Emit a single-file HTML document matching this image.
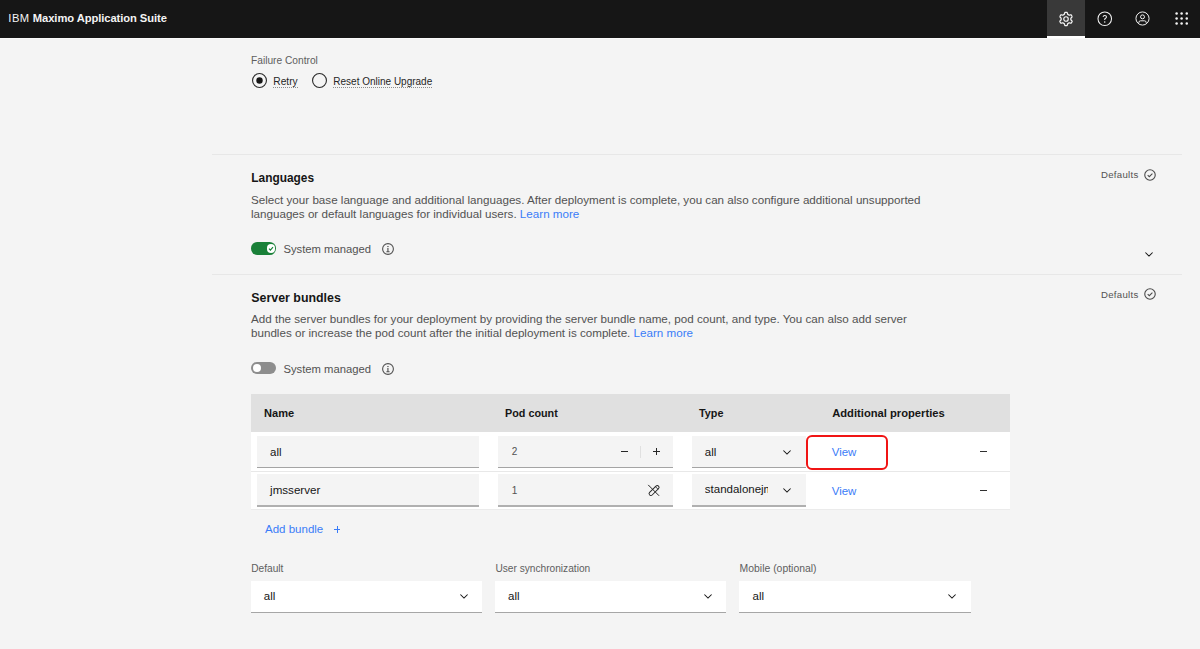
<!DOCTYPE html>
<html><head><meta charset="utf-8">
<style>
*{box-sizing:border-box;margin:0;padding:0}
html,body{width:1200px;height:649px;overflow:hidden;background:#f4f4f4;font-family:"Liberation Sans",sans-serif;color:#161616}
.a{position:absolute}
.t{position:absolute;line-height:1;white-space:nowrap}
.b{font-weight:bold}
#hdr{left:0;top:0;width:1200px;height:38px;background:#161616}
.lnk{color:#3a7cf8}
.sec{color:#5e5e5e}
.hr{position:absolute;left:212px;width:970px;height:1px;background:#e7e7e7}
.inp{position:absolute;background:#f4f4f4;border-bottom:1px solid #a4a4a4}
.inp2{border-bottom:2px solid #b0b0b0}
.sel{position:absolute;background:#fff;border-bottom:1px solid #a6a6a6}
svg{position:absolute;overflow:visible}
</style></head><body>
<!-- header -->
<div id="hdr" class="a"></div>
<div class="t" style="left:8.3px;top:12.9px;font-size:11.2px;color:#f4f4f4"><span style="letter-spacing:0.5px">IBM</span> <span class="b" style="letter-spacing:-0.07px">Maximo Application Suite</span></div>
<div class="a" style="left:1047px;top:0;width:38px;height:36px;background:#393939"></div>
<div class="a" style="left:1047px;top:36px;width:38px;height:2px;background:#fff"></div>
<div class="a" style="left:0;top:38px;width:1200px;height:1px;background:#fafafa"></div>

<!-- gear -->
<svg style="left:1058px;top:10.6px" width="16" height="16" viewBox="0 0 16 16"><path fill="none" stroke="#f4f4f4" stroke-width="1.25" stroke-linejoin="round" d="M12.90,8.00 L12.90,8.09 L12.90,8.17 L12.89,8.26 L12.89,8.34 L12.88,8.43 L12.87,8.51 L12.86,8.60 L12.85,8.68 L12.84,8.77 L12.91,8.87 L13.03,8.98 L13.16,9.10 L13.29,9.22 L13.42,9.35 L13.55,9.49 L13.68,9.63 L13.80,9.77 L13.92,9.92 L14.03,10.07 L14.12,10.23 L14.16,10.37 L14.12,10.47 L14.08,10.58 L14.03,10.68 L13.98,10.79 L13.93,10.89 L13.88,11.00 L13.83,11.10 L13.77,11.20 L13.72,11.30 L13.66,11.40 L13.60,11.50 L13.54,11.59 L13.47,11.69 L13.41,11.79 L13.34,11.88 L13.27,11.97 L13.20,12.06 L13.13,12.15 L12.99,12.19 L12.81,12.18 L12.62,12.16 L12.44,12.14 L12.25,12.11 L12.07,12.07 L11.88,12.02 L11.70,11.97 L11.53,11.92 L11.36,11.87 L11.20,11.82 L11.08,11.81 L11.02,11.86 L10.95,11.91 L10.88,11.96 L10.81,12.01 L10.74,12.06 L10.67,12.11 L10.60,12.16 L10.52,12.20 L10.45,12.24 L10.38,12.29 L10.30,12.33 L10.22,12.37 L10.15,12.40 L10.07,12.44 L9.99,12.48 L9.91,12.51 L9.84,12.54 L9.76,12.57 L9.70,12.68 L9.67,12.85 L9.63,13.02 L9.59,13.19 L9.54,13.37 L9.49,13.55 L9.43,13.73 L9.37,13.91 L9.29,14.09 L9.22,14.26 L9.13,14.42 L9.03,14.52 L8.92,14.54 L8.80,14.55 L8.69,14.56 L8.58,14.57 L8.46,14.58 L8.35,14.59 L8.23,14.60 L8.12,14.60 L8.00,14.60 L7.88,14.60 L7.77,14.60 L7.65,14.59 L7.54,14.58 L7.42,14.57 L7.31,14.56 L7.20,14.55 L7.08,14.54 L6.97,14.52 L6.87,14.42 L6.78,14.26 L6.71,14.09 L6.63,13.91 L6.57,13.73 L6.51,13.55 L6.46,13.37 L6.41,13.19 L6.37,13.02 L6.33,12.85 L6.30,12.68 L6.24,12.57 L6.16,12.54 L6.09,12.51 L6.01,12.48 L5.93,12.44 L5.85,12.40 L5.78,12.37 L5.70,12.33 L5.62,12.29 L5.55,12.24 L5.48,12.20 L5.40,12.16 L5.33,12.11 L5.26,12.06 L5.19,12.01 L5.12,11.96 L5.05,11.91 L4.98,11.86 L4.92,11.81 L4.80,11.82 L4.64,11.87 L4.47,11.92 L4.30,11.97 L4.12,12.02 L3.93,12.07 L3.75,12.11 L3.56,12.14 L3.38,12.16 L3.19,12.18 L3.01,12.19 L2.87,12.15 L2.80,12.06 L2.73,11.97 L2.66,11.88 L2.59,11.79 L2.53,11.69 L2.46,11.59 L2.40,11.50 L2.34,11.40 L2.28,11.30 L2.23,11.20 L2.17,11.10 L2.12,11.00 L2.07,10.89 L2.02,10.79 L1.97,10.68 L1.92,10.58 L1.88,10.47 L1.84,10.37 L1.88,10.23 L1.97,10.07 L2.08,9.92 L2.20,9.77 L2.32,9.63 L2.45,9.49 L2.58,9.35 L2.71,9.22 L2.84,9.10 L2.97,8.98 L3.09,8.87 L3.16,8.77 L3.15,8.68 L3.14,8.60 L3.13,8.51 L3.12,8.43 L3.11,8.34 L3.11,8.26 L3.10,8.17 L3.10,8.09 L3.10,8.00 L3.10,7.91 L3.10,7.83 L3.11,7.74 L3.11,7.66 L3.12,7.57 L3.13,7.49 L3.14,7.40 L3.15,7.32 L3.16,7.23 L3.09,7.13 L2.97,7.02 L2.84,6.90 L2.71,6.78 L2.58,6.65 L2.45,6.51 L2.32,6.37 L2.20,6.23 L2.08,6.08 L1.97,5.93 L1.88,5.77 L1.84,5.63 L1.88,5.53 L1.92,5.42 L1.97,5.32 L2.02,5.21 L2.07,5.11 L2.12,5.00 L2.17,4.90 L2.23,4.80 L2.28,4.70 L2.34,4.60 L2.40,4.50 L2.46,4.41 L2.53,4.31 L2.59,4.21 L2.66,4.12 L2.73,4.03 L2.80,3.94 L2.87,3.85 L3.01,3.81 L3.19,3.82 L3.38,3.84 L3.56,3.86 L3.75,3.89 L3.93,3.93 L4.12,3.98 L4.30,4.03 L4.47,4.08 L4.64,4.13 L4.80,4.18 L4.92,4.19 L4.98,4.14 L5.05,4.09 L5.12,4.04 L5.19,3.99 L5.26,3.94 L5.33,3.89 L5.40,3.84 L5.48,3.80 L5.55,3.76 L5.62,3.71 L5.70,3.67 L5.78,3.63 L5.85,3.60 L5.93,3.56 L6.01,3.52 L6.09,3.49 L6.16,3.46 L6.24,3.43 L6.30,3.32 L6.33,3.15 L6.37,2.98 L6.41,2.81 L6.46,2.63 L6.51,2.45 L6.57,2.27 L6.63,2.09 L6.71,1.91 L6.78,1.74 L6.87,1.58 L6.97,1.48 L7.08,1.46 L7.20,1.45 L7.31,1.44 L7.42,1.43 L7.54,1.42 L7.65,1.41 L7.77,1.40 L7.88,1.40 L8.00,1.40 L8.12,1.40 L8.23,1.40 L8.35,1.41 L8.46,1.42 L8.58,1.43 L8.69,1.44 L8.80,1.45 L8.92,1.46 L9.03,1.48 L9.13,1.58 L9.22,1.74 L9.29,1.91 L9.37,2.09 L9.43,2.27 L9.49,2.45 L9.54,2.63 L9.59,2.81 L9.63,2.98 L9.67,3.15 L9.70,3.32 L9.76,3.43 L9.84,3.46 L9.91,3.49 L9.99,3.52 L10.07,3.56 L10.15,3.60 L10.22,3.63 L10.30,3.67 L10.38,3.71 L10.45,3.76 L10.52,3.80 L10.60,3.84 L10.67,3.89 L10.74,3.94 L10.81,3.99 L10.88,4.04 L10.95,4.09 L11.02,4.14 L11.08,4.19 L11.20,4.18 L11.36,4.13 L11.53,4.08 L11.70,4.03 L11.88,3.98 L12.07,3.93 L12.25,3.89 L12.44,3.86 L12.62,3.84 L12.81,3.82 L12.99,3.81 L13.13,3.85 L13.20,3.94 L13.27,4.03 L13.34,4.12 L13.41,4.21 L13.47,4.31 L13.54,4.41 L13.60,4.50 L13.66,4.60 L13.72,4.70 L13.77,4.80 L13.83,4.90 L13.88,5.00 L13.93,5.11 L13.98,5.21 L14.03,5.32 L14.08,5.42 L14.12,5.53 L14.16,5.63 L14.12,5.77 L14.03,5.93 L13.92,6.08 L13.80,6.23 L13.68,6.37 L13.55,6.51 L13.42,6.65 L13.29,6.78 L13.16,6.90 L13.03,7.02 L12.91,7.13 L12.84,7.23 L12.85,7.32 L12.86,7.40 L12.87,7.49 L12.88,7.57 L12.89,7.66 L12.89,7.74 L12.90,7.83 L12.90,7.91Z"/><circle cx="8" cy="8" r="2.25" fill="none" stroke="#f4f4f4" stroke-width="1.2"/></svg>
<!-- help -->
<svg style="left:1096.7px;top:10.6px" width="15.5" height="15.5" viewBox="0 0 32 32"><circle cx="16" cy="16" r="14" fill="none" stroke="#f4f4f4" stroke-width="2.1"/><path fill="#f4f4f4" d="M16.8,22.5a1.5,1.5,0,1,1-1.5-1.5A1.5,1.5,0,0,1,16.8,22.5Z" transform="translate(0.7,0)"/><path fill="none" stroke="#f4f4f4" stroke-width="2.1" d="M12.5,12.2a3.6,3.6,0,0,1,3.5-3.1c2.1,0,3.6,1.4,3.6,3.2c0,1.8-1.5,2.6-2.6,3.2c-0.6,0.35-1,0.8-1,1.6v1.3"/></svg>
<!-- user -->
<svg style="left:1135.1px;top:10.8px" width="15" height="15" viewBox="0 0 32 32"><circle cx="16" cy="16" r="14" fill="none" stroke="#f4f4f4" stroke-width="2.1"/><circle cx="16" cy="12.5" r="4.2" fill="none" stroke="#f4f4f4" stroke-width="2.1"/><path fill="none" stroke="#f4f4f4" stroke-width="2.1" d="M8.2,25.6v-1.1a3.6,3.6,0,0,1,3.6-3.6h8.4a3.6,3.6,0,0,1,3.6,3.6v1.1"/></svg>
<!-- grid -->
<svg style="left:1175px;top:12px" width="13" height="13" viewBox="0 0 13 13"><g fill="#f4f4f4"><circle cx="1.6" cy="1.4" r="1.25"/><circle cx="6.6" cy="1.4" r="1.25"/><circle cx="11.75" cy="1.4" r="1.25"/><circle cx="1.6" cy="6.4" r="1.25"/><circle cx="6.6" cy="6.4" r="1.25"/><circle cx="11.75" cy="6.4" r="1.25"/><circle cx="1.6" cy="11.4" r="1.25"/><circle cx="6.6" cy="11.4" r="1.25"/><circle cx="11.75" cy="11.4" r="1.25"/></g></svg>

<!-- Failure control -->
<div class="t sec" style="left:251px;top:56.2px;font-size:10.2px">Failure Control</div>
<svg style="left:252.2px;top:73.4px" width="15" height="15" viewBox="0 0 15 15"><circle cx="7.5" cy="7.5" r="6.95" fill="none" stroke="#2a2a2a" stroke-width="1.1"/><circle cx="7.5" cy="7.5" r="3.2" fill="#161616"/></svg>
<div class="t" style="left:273.3px;top:76.7px;font-size:10.2px;color:#262626">Retry</div>
<div class="a" style="left:273px;top:87px;width:25px;height:0;border-top:1px dotted #8d8d8d"></div>
<svg style="left:312.2px;top:73.4px" width="15" height="15" viewBox="0 0 15 15"><circle cx="7.5" cy="7.5" r="6.95" fill="none" stroke="#2a2a2a" stroke-width="1.1"/></svg>
<div class="t" style="left:333.3px;top:76.7px;font-size:10px;color:#262626">Reset Online Upgrade</div>
<div class="a" style="left:333px;top:87px;width:99px;height:0;border-top:1px dotted #8d8d8d"></div>

<div class="hr" style="top:154px"></div>

<!-- Languages -->
<div class="t b" style="left:251.3px;top:173px;font-size:11.9px">Languages</div>
<div class="t" style="left:251px;top:194px;font-size:11.64px;color:#525252">Select your base language and additional languages. After deployment is complete, you can also configure additional unsupported</div>
<div class="t" style="left:251px;top:208.2px;font-size:11.64px;color:#525252">languages or default languages for individual users. <span class="lnk">Learn more</span></div>
<div class="t" style="left:1101px;top:170.4px;font-size:9.6px;letter-spacing:0.3px;color:#525252">Defaults</div>
<svg style="left:1143.7px;top:168.8px" width="12" height="12" viewBox="0 0 32 32"><circle cx="16" cy="16" r="14" fill="none" stroke="#4a4a4a" stroke-width="2.9"/><path fill="none" stroke="#4a4a4a" stroke-width="2.7" d="M9.8,16.3l4.3,4.3l8.3-8.3"/></svg>
<!-- toggle on -->
<div class="a" style="left:251px;top:242px;width:25.4px;height:12.8px;border-radius:6.4px;background:#198038"></div>
<div class="a" style="left:266.8px;top:244.1px;width:8.6px;height:8.6px;border-radius:50%;background:#fff"></div>
<svg style="left:266px;top:243px" width="10" height="10" viewBox="0 0 10 10"><path fill="none" stroke="#198038" stroke-width="1.2" d="M3,5.6l1.4,1.5l2.6,-3"/></svg>
<div class="t" style="left:283.4px;top:244px;font-size:11.26px;color:#525252">System managed</div>
<svg style="left:382px;top:243.1px" width="12" height="12" viewBox="0 0 12 12"><circle cx="6" cy="6" r="5.4" fill="none" stroke="#525252" stroke-width="1.1"/><path fill="#525252" d="M5.3,5.1h1.2v3.2h1.1v0.9h-3.2v-0.9h1z"/><rect x="5.3" y="3.0" width="1.3" height="1.1" fill="#525252"/></svg>
<svg style="left:1145.1px;top:252.4px" width="8" height="5" viewBox="0 0 8 5"><path fill="none" stroke="#161616" stroke-width="1.05" d="M0.4,0.5l3.6,3.6l3.6,-3.6"/></svg>

<div class="hr" style="top:274px"></div>

<!-- Server bundles -->
<div class="t b" style="left:251.3px;top:291.6px;font-size:12.4px">Server bundles</div>
<div class="t" style="left:251px;top:312.8px;font-size:11.64px;color:#525252">Add the server bundles for your deployment by providing the server bundle name, pod count, and type. You can also add server</div>
<div class="t" style="left:251px;top:327px;font-size:11.64px;color:#525252">bundles or increase the pod count after the initial deployment is complete. <span class="lnk">Learn more</span></div>
<div class="t" style="left:1101px;top:290px;font-size:9.6px;letter-spacing:0.3px;color:#525252">Defaults</div>
<svg style="left:1143.7px;top:288.4px" width="12" height="12" viewBox="0 0 32 32"><circle cx="16" cy="16" r="14" fill="none" stroke="#4a4a4a" stroke-width="2.9"/><path fill="none" stroke="#4a4a4a" stroke-width="2.7" d="M9.8,16.3l4.3,4.3l8.3-8.3"/></svg>
<!-- toggle off -->
<div class="a" style="left:251px;top:361.6px;width:25.4px;height:12.8px;border-radius:6.4px;background:#8d8d8d"></div>
<div class="a" style="left:252.6px;top:363.7px;width:8.6px;height:8.6px;border-radius:50%;background:#fff"></div>
<div class="t" style="left:283.4px;top:363.6px;font-size:11.26px;color:#525252">System managed</div>
<svg style="left:382px;top:362.7px" width="12" height="12" viewBox="0 0 12 12"><circle cx="6" cy="6" r="5.4" fill="none" stroke="#525252" stroke-width="1.1"/><path fill="#525252" d="M5.3,5.1h1.2v3.2h1.1v0.9h-3.2v-0.9h1z"/><rect x="5.3" y="3.0" width="1.3" height="1.1" fill="#525252"/></svg>

<!-- table -->
<div class="a" style="left:251px;top:394px;width:759px;height:38px;background:#e0e0e0"></div>
<div class="t b" style="left:264.1px;top:408.3px;font-size:11.07px">Name</div>
<div class="t b" style="left:505px;top:408.3px;font-size:10.8px">Pod count</div>
<div class="t b" style="left:699px;top:408.3px;font-size:10.8px">Type</div>
<div class="t b" style="left:832.2px;top:408.3px;font-size:11.2px">Additional properties</div>

<div class="a" style="left:251px;top:432px;width:759px;height:39px;background:#fff"></div>
<div class="a" style="left:251px;top:471px;width:759px;height:1px;background:#e8e8e8"></div>
<div class="a" style="left:251px;top:472px;width:759px;height:37px;background:#fff"></div>
<div class="a" style="left:251px;top:509px;width:759px;height:1px;background:#ebebeb"></div>

<!-- row 1 -->
<div class="inp" style="left:257px;top:436px;width:222px;height:32px"></div>
<div class="t" style="left:270.1px;top:447px;font-size:11.5px;color:#161616">all</div>
<div class="inp" style="left:498px;top:436px;width:175px;height:32px"></div>
<div class="t" style="left:511.8px;top:447.4px;font-size:10px;color:#525252">2</div>
<div class="a" style="left:621px;top:451px;width:7px;height:1px;background:#262626"></div>
<div class="a" style="left:640px;top:446px;width:1px;height:12px;background:#e0e0e0"></div>
<div class="a" style="left:653.3px;top:451px;width:7px;height:1px;background:#262626"></div>
<div class="a" style="left:656.2px;top:448px;width:1px;height:7px;background:#262626"></div>
<div class="inp" style="left:692px;top:436px;width:114px;height:32px"></div>
<div class="t" style="left:704.8px;top:447px;font-size:11.5px;color:#161616">all</div>
<svg style="left:782.5px;top:450px" width="8" height="5" viewBox="0 0 8 5"><path fill="none" stroke="#161616" stroke-width="1.05" d="M0.4,0.5l3.6,3.6l3.6,-3.6"/></svg>
<div class="t lnk" style="left:831.7px;top:446.5px;font-size:11.48px">View</div>
<div class="a" style="left:806.4px;top:435.3px;width:81.2px;height:34.4px;border:2px solid #f01414;border-radius:6px"></div>
<div class="a" style="left:980.3px;top:451px;width:6.8px;height:1.4px;background:#303030"></div>

<!-- row 2 -->
<div class="inp inp2" style="left:257px;top:474px;width:222px;height:33px"></div>
<div class="t" style="left:270.1px;top:483.6px;font-size:11.6px;color:#161616">jmsserver</div>
<div class="inp inp2" style="left:498px;top:474px;width:175px;height:33px"></div>
<div class="t" style="left:511.8px;top:485.8px;font-size:10px;color:#525252">1</div>
<svg style="left:646px;top:482px" width="16" height="16" viewBox="0 0 16 16"><line x1="2.2" y1="2.9" x2="13.1" y2="13.8" stroke="#262626" stroke-width="1"/><g transform="translate(0.2,0.6) rotate(-45 7.8 8)"><rect x="1.6" y="6.2" width="12.6" height="3.6" rx="1.8" fill="none" stroke="#262626" stroke-width="0.95"/><line x1="11.6" y1="6.2" x2="11.6" y2="9.8" stroke="#262626" stroke-width="0.8"/></g></svg>
<div class="inp inp2" style="left:692px;top:474px;width:114px;height:33px"></div>
<div class="t" style="left:704.8px;top:484.4px;font-size:11.5px;color:#161616;width:63px;overflow:hidden">standalonejms</div>
<svg style="left:782.5px;top:487.6px" width="8" height="5" viewBox="0 0 8 5"><path fill="none" stroke="#161616" stroke-width="1.05" d="M0.4,0.5l3.6,3.6l3.6,-3.6"/></svg>
<div class="t lnk" style="left:831.7px;top:485.6px;font-size:11.48px">View</div>
<div class="a" style="left:980.3px;top:489.8px;width:6.8px;height:1.4px;background:#303030"></div>

<!-- add bundle -->
<div class="t lnk" style="left:265px;top:524.4px;font-size:11.52px">Add bundle</div>
<div class="a" style="left:333.8px;top:529px;width:6.6px;height:1px;background:#3a7cf8"></div>
<div class="a" style="left:336.6px;top:526px;width:1px;height:6.6px;background:#3a7cf8"></div>

<!-- bottom selects -->
<div class="t sec" style="left:251.2px;top:564px;font-size:10.17px">Default</div>
<div class="sel" style="left:251px;top:581px;width:231px;height:31.5px"></div>
<div class="t" style="left:263.8px;top:591.2px;font-size:11.5px">all</div>
<svg style="left:459.6px;top:594.1px" width="8" height="5" viewBox="0 0 8 5"><path fill="none" stroke="#161616" stroke-width="1.05" d="M0.4,0.5l3.6,3.6l3.6,-3.6"/></svg>

<div class="t sec" style="left:495.4px;top:564px;font-size:10.17px">User synchronization</div>
<div class="sel" style="left:495.2px;top:581px;width:231.3px;height:31.5px"></div>
<div class="t" style="left:508.1px;top:591.2px;font-size:11.5px">all</div>
<svg style="left:703.5px;top:594.1px" width="8" height="5" viewBox="0 0 8 5"><path fill="none" stroke="#161616" stroke-width="1.05" d="M0.4,0.5l3.6,3.6l3.6,-3.6"/></svg>

<div class="t sec" style="left:739.6px;top:564px;font-size:10.41px">Mobile (optional)</div>
<div class="sel" style="left:739.4px;top:581px;width:231.6px;height:31.5px"></div>
<div class="t" style="left:752.5px;top:591.2px;font-size:11.5px">all</div>
<svg style="left:947.7px;top:594.1px" width="8" height="5" viewBox="0 0 8 5"><path fill="none" stroke="#161616" stroke-width="1.05" d="M0.4,0.5l3.6,3.6l3.6,-3.6"/></svg>
</body></html>
